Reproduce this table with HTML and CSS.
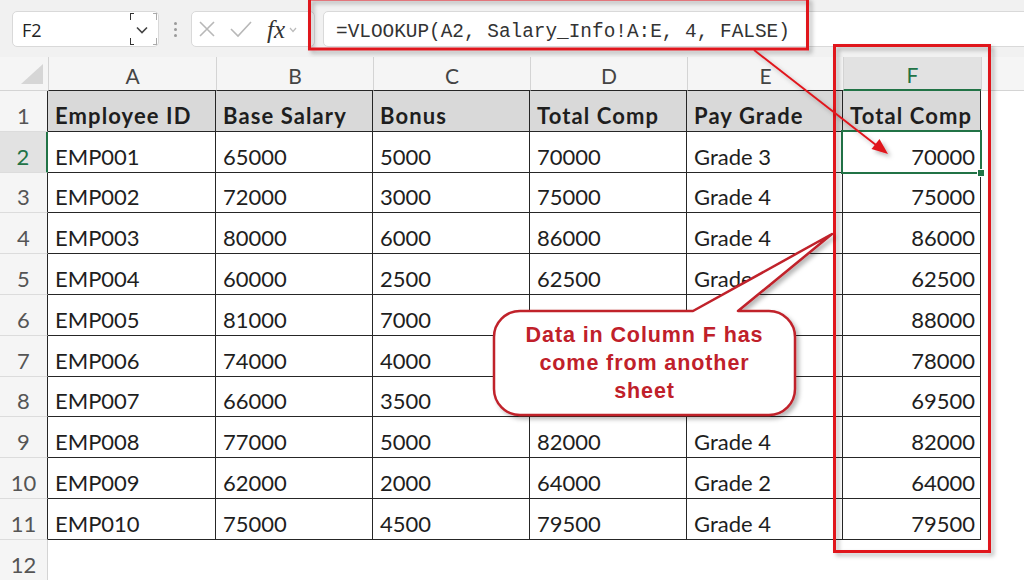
FILE: index.html
```html
<!DOCTYPE html>
<html>
<head>
<meta charset="utf-8">
<link rel="stylesheet" href="styles.css">
</head>
<body>
<div class="app">
  <div class="toolbar">
    <div class="namebox">
      <span class="nb-text">F2</span>
      <span class="nb-handle nb-tl"></span><span class="nb-handle nb-bl"></span><span class="nb-handle nb-tr"></span><span class="nb-handle nb-br"></span>
      <svg class="nb-chev" width="12" height="8" viewBox="0 0 12 8"><path d="M1 1.5 L6 6.5 L11 1.5" fill="none" stroke="#444" stroke-width="1.6"/></svg>
    </div>
    <div class="grip"><i></i><i></i><i></i></div>
    <div class="fbtns">
      <svg width="18" height="18" viewBox="0 0 18 18"><path d="M2 2 L16 16 M16 2 L2 16" stroke="#b8b8b8" stroke-width="1.6" fill="none"/></svg>
      <svg width="22" height="18" viewBox="0 0 22 18"><path d="M1 9 L8 16 L21 2" stroke="#b8b8b8" stroke-width="1.6" fill="none"/></svg>
      <span class="fx">fx</span>
      <svg class="fx-chev" width="8" height="6" viewBox="0 0 8 6"><path d="M1 1 L4 4.5 L7 1" fill="none" stroke="#bbb" stroke-width="1.2"/></svg>
    </div>
    <div class="formula">=VLOOKUP(A2, Salary_Info!A:E, 4, FALSE)</div>
  </div>

  <div class="sheet">
    <div class="corner"><svg width="26" height="24" viewBox="0 0 26 24"><path d="M2 22 L24 22 L24 2 Z" fill="#d6d6d6"/></svg></div>
    <div class="ch">A</div><div class="ch">B</div><div class="ch">C</div><div class="ch">D</div><div class="ch">E</div><div class="ch chsel">F</div><div class="ch chx"></div>

    <div class="rh">1</div>
    <div class="c hd">Employee ID</div><div class="c hd">Base Salary</div><div class="c hd">Bonus</div><div class="c hd">Total Comp</div><div class="c hd">Pay Grade</div><div class="c hd">Total Comp</div><div class="x"></div>

    <div class="rh rhsel">2</div>
    <div class="c">EMP001</div><div class="c">65000</div><div class="c">5000</div><div class="c">70000</div><div class="c">Grade 3</div><div class="c num sel">70000</div><div class="x"></div>

    <div class="rh">3</div>
    <div class="c">EMP002</div><div class="c">72000</div><div class="c">3000</div><div class="c">75000</div><div class="c">Grade 4</div><div class="c num">75000</div><div class="x"></div>

    <div class="rh">4</div>
    <div class="c">EMP003</div><div class="c">80000</div><div class="c">6000</div><div class="c">86000</div><div class="c">Grade 4</div><div class="c num">86000</div><div class="x"></div>

    <div class="rh">5</div>
    <div class="c">EMP004</div><div class="c">60000</div><div class="c">2500</div><div class="c">62500</div><div class="c">Grade 2</div><div class="c num">62500</div><div class="x"></div>

    <div class="rh">6</div>
    <div class="c">EMP005</div><div class="c">81000</div><div class="c">7000</div><div class="c"></div><div class="c"></div><div class="c num">88000</div><div class="x"></div>

    <div class="rh">7</div>
    <div class="c">EMP006</div><div class="c">74000</div><div class="c">4000</div><div class="c"></div><div class="c"></div><div class="c num">78000</div><div class="x"></div>

    <div class="rh">8</div>
    <div class="c">EMP007</div><div class="c">66000</div><div class="c">3500</div><div class="c"></div><div class="c"></div><div class="c num">69500</div><div class="x"></div>

    <div class="rh">9</div>
    <div class="c">EMP008</div><div class="c">77000</div><div class="c">5000</div><div class="c">82000</div><div class="c">Grade 4</div><div class="c num">82000</div><div class="x"></div>

    <div class="rh">10</div>
    <div class="c">EMP009</div><div class="c">62000</div><div class="c">2000</div><div class="c">64000</div><div class="c">Grade 2</div><div class="c num">64000</div><div class="x"></div>

    <div class="rh">11</div>
    <div class="c">EMP010</div><div class="c">75000</div><div class="c">4500</div><div class="c">79500</div><div class="c">Grade 4</div><div class="c num">79500</div><div class="x"></div>

    <div class="rh rhlast">12</div>
    <div class="x"></div><div class="x"></div><div class="x"></div><div class="x"></div><div class="x"></div><div class="x"></div><div class="x"></div>
  </div>

  <svg class="overlay" width="1024" height="580" viewBox="0 0 1024 580">
    <defs>
      <filter id="sh" x="-10%" y="-10%" width="130%" height="130%">
        <feDropShadow dx="3" dy="3" stdDeviation="2" flood-color="#000" flood-opacity="0.28"/>
      </filter>
    </defs>
    <rect x="309.5" y="-1" width="498" height="50" fill="none" stroke="#e0171e" stroke-width="3" filter="url(#sh)"/>
    <rect x="834.5" y="45.5" width="155" height="506" fill="none" stroke="#e0171e" stroke-width="3" filter="url(#sh)"/>
    <g filter="url(#sh)">
      <line x1="754" y1="50" x2="876" y2="145" stroke="#e0171e" stroke-width="2"/>
      <polygon points="888,154 871.5,149 879.5,139" fill="#e0171e"/>
    </g>
    <path filter="url(#sh)" d="M520 311 L693 311 L832 234 L738 311 L769 311 A26 26 0 0 1 795 337 L795 389 A26 26 0 0 1 769 415 L520 415 A26 26 0 0 1 494 389 L494 337 A26 26 0 0 1 520 311 Z" fill="#fff" stroke="#c0202a" stroke-width="2.5" stroke-linejoin="round"/>
  </svg>
  <div class="callout">Data in Column F has<br>come from another<br>sheet</div>
</div>
</body>
</html>
```

FILE: styles.css
```css
html, body {
  margin: 0;
  padding: 0;
}
body {
  width: 1024px;
  height: 580px;
  overflow: hidden;
  background: #fff;
  font-family: Lato, "Liberation Sans", sans-serif;
}
.app {
  position: relative;
  width: 1024px;
  height: 580px;
  display: flex;
  flex-direction: column;
}

/* toolbar */
.toolbar {
  flex: none;
  height: 57px;
  box-sizing: border-box;
  padding: 11px 0 0 12px;
  background: #f1f1f1;
  display: flex;
  align-items: flex-start;
}
.namebox {
  position: relative;
  width: 147px;
  height: 36px;
  box-sizing: border-box;
  background: #fff;
  border: 1px solid #d9d9d9;
  border-radius: 5px;
  display: flex;
  align-items: center;
  padding: 2px 0 0 9px;
}
.nb-text {
  font-family: "Open Sans", sans-serif;
  font-size: 18px;
  color: #222;
}
.nb-chev {
  position: absolute;
  left: 123px;
  top: 14px;
}
.nb-handle {
  position: absolute;
  width: 3px;
  height: 6px;
  border: 0 solid #333;
}
.nb-tl { left: 117px; top: 1px; border-left-width: 1.5px; border-top-width: 1.5px; }
.nb-bl { left: 117px; bottom: 1px; border-left-width: 1.5px; border-bottom-width: 1.5px; }
.nb-tr { right: 1px; top: 1px; border-right-width: 1px; border-top-width: 1px; border-color: #aaa; }
.nb-br { right: 1px; bottom: 1px; border-right-width: 1px; border-bottom-width: 1px; border-color: #aaa; }

.grip {
  width: 32px;
  height: 36px;
  display: flex;
  flex-direction: column;
  align-items: center;
  justify-content: center;
  gap: 3px;
}
.grip i {
  display: block;
  width: 3px;
  height: 3px;
  border-radius: 50%;
  background: #9a9a9a;
}
.fbtns {
  width: 124px;
  height: 36px;
  box-sizing: border-box;
  background: #fff;
  border: 1px solid #d9d9d9;
  border-radius: 5px;
  display: flex;
  align-items: center;
  padding-left: 6px;
  gap: 14px;
}
.fx {
  font-family: "Liberation Serif", "DejaVu Serif", serif;
  font-style: italic;
  font-size: 25px;
  color: #333;
  margin-left: 1px;
  line-height: 1;
}
.fx-chev {
  margin-left: -10px;
  margin-top: 2px;
}
.formula {
  flex: 1;
  margin-left: 8px;
  margin-right: -8px;
  height: 36px;
  box-sizing: border-box;
  background: #fff;
  border: 1px solid #d9d9d9;
  border-radius: 5px;
  padding: 5px 0 0 12px;
  display: flex;
  align-items: center;
  font-family: "Liberation Mono", "DejaVu Sans Mono", monospace;
  font-size: 19.4px;
  color: #333;
  white-space: pre;
}

/* sheet grid */
.sheet {
  flex: 1;
  display: grid;
  grid-template-columns: 48px 168px 157px 157px 157px 156px 138px 1fr;
  grid-template-rows: 34px repeat(11, 40.8px) 1fr;
  background: #fff;
}
.sheet > div {
  box-sizing: border-box;
}
.corner {
  background: #f5f5f5;
  border-bottom: 1px solid #d4d4d4;
  display: flex;
  align-items: flex-end;
  justify-content: flex-end;
  padding: 0 3px 4px 0;
}
.ch {
  background: #f5f5f5;
  border-left: 1px solid #d4d4d4;
  border-bottom: 1px solid #262626;
  display: flex;
  align-items: center;
  justify-content: center;
  font-size: 21px;
  color: #444;
  padding-top: 3px;
}
.chsel {
  background: #e2e2e2;
  color: #217346;
  border-bottom: 2px solid #217346;
}
.chx {
  border-bottom: 1px solid #d4d4d4;
}
.rh {
  background: #f5f5f5;
  border-right: 1px solid #262626;
  border-bottom: 1px solid #dcdcdc;
  display: flex;
  align-items: flex-end;
  justify-content: center;
  padding-bottom: 2px;
  font-size: 22px;
  line-height: 26px;
  color: #555;
}
.rhsel {
  background: #e2e2e2;
  color: #217346;
  border-right: 2px solid #217346;
}
.rhlast {
  border-right: 1px solid #d4d4d4;
  border-bottom: none;
}
.c {
  border-right: 1px solid #262626;
  border-bottom: 1px solid #262626;
  display: flex;
  align-items: flex-end;
  padding: 0 0 2px 7px;
  font-size: 22px;
  line-height: 26px;
  color: #1e1e1e;
  white-space: nowrap;
  overflow: hidden;
}
.hd {
  background: #d9d9d9;
  font-weight: 700;
  letter-spacing: 1.1px;
}
.num {
  justify-content: flex-end;
  padding-right: 5px;
}
.sel {
  position: relative;
  overflow: visible;
}
.sel::after {
  content: "";
  position: absolute;
  left: -2px;
  top: -2px;
  right: -2px;
  bottom: -2px;
  border: 2px solid #217346;
}
.sel::before {
  content: "";
  position: absolute;
  right: -5px;
  bottom: -5px;
  width: 6px;
  height: 6px;
  background: #217346;
  border: 1px solid #fff;
  z-index: 2;
}

/* annotations */
.overlay {
  position: absolute;
  left: 0;
  top: 0;
  pointer-events: none;
}
.callout {
  position: absolute;
  left: 494px;
  top: 311px;
  width: 301px;
  height: 104px;
  display: flex;
  align-items: center;
  justify-content: center;
  text-align: center;
  font-family: "Liberation Sans", Arial, sans-serif;
  font-weight: 700;
  font-size: 21.5px;
  letter-spacing: 0.9px;
  line-height: 28px;
  color: #c0202a;
}
```
